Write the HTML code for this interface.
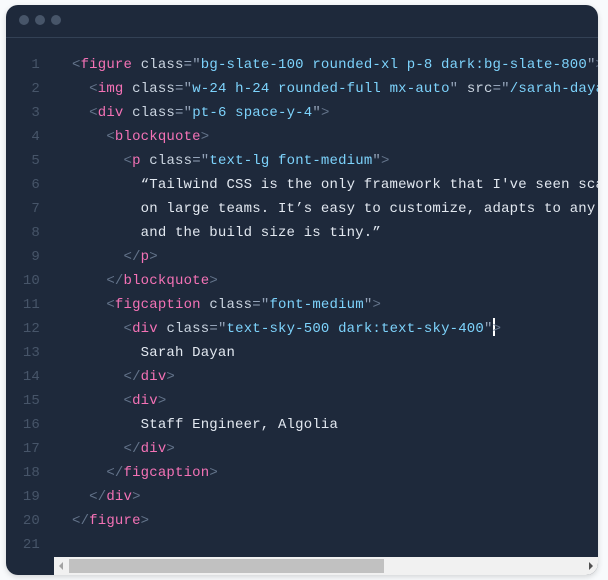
<!DOCTYPE html>
<html><head><meta charset="utf-8"><style>
html,body{margin:0;padding:0;width:608px;height:580px;background:#f8fafc;overflow:hidden}
.card{position:absolute;left:6px;top:5px;width:592px;height:570px;background:#1e293b;border-radius:12px;overflow:hidden;box-shadow:0 2px 6px rgba(0,0,0,.15)}
.hdr{height:32px;border-bottom:1px solid #334155;position:relative}
.dot{position:absolute;top:10px;width:10px;height:10px;border-radius:50%;background:#475569}
.code{position:absolute;top:48px;left:0;font-family:"Liberation Mono",monospace;font-size:14px;line-height:24px;white-space:pre;color:#e2e8f0;letter-spacing:0.18px}
.ln{position:absolute;top:0;left:0;width:34px;text-align:right;color:#475569}
.tx{position:absolute;top:0;left:66px}
.t{color:#f472b6}.p{color:#64748b}.a{color:#cbd5e1}.s{color:#7dd3fc}.e{color:#94a3b8}
.cur{display:inline-block;width:2px;height:18px;background:#fff;vertical-align:-4px;margin-right:-2px}
.sb{position:absolute;left:48px;top:552px;width:544px;height:18px;background:#f1f1f1}
.th{position:absolute;left:15px;top:2px;width:315px;height:14px;background:#c1c1c1}
.ar{position:absolute;top:5px;width:0;height:0;border-top:4px solid transparent;border-bottom:4px solid transparent}
</style></head><body>
<div class="card">
<div class="hdr"><div class="dot" style="left:13px"></div><div class="dot" style="left:29px"></div><div class="dot" style="left:45px"></div></div>
<div class="code"><div class="ln">1
2
3
4
5
6
7
8
9
10
11
12
13
14
15
16
17
18
19
20
21</div><div class="tx"><span class="p">&lt;</span><span class="t">figure</span> <span class="a">class</span><span class="e">="</span><span class="s">bg-slate-100 rounded-xl p-8 dark:bg-slate-800</span><span class="e">"</span><span class="p">&gt;</span>
  <span class="p">&lt;</span><span class="t">img</span> <span class="a">class</span><span class="e">="</span><span class="s">w-24 h-24 rounded-full mx-auto</span><span class="e">"</span> <span class="a">src</span><span class="e">="</span><span class="s">/sarah-dayan.jpg</span><span class="e">"</span>
  <span class="p">&lt;</span><span class="t">div</span> <span class="a">class</span><span class="e">="</span><span class="s">pt-6 space-y-4</span><span class="e">"</span><span class="p">&gt;</span>
    <span class="p">&lt;</span><span class="t">blockquote</span><span class="p">&gt;</span>
      <span class="p">&lt;</span><span class="t">p</span> <span class="a">class</span><span class="e">="</span><span class="s">text-lg font-medium</span><span class="e">"</span><span class="p">&gt;</span>
        “Tailwind CSS is the only framework that I've seen scale
        on large teams. It’s easy to customize, adapts to any design,
        and the build size is tiny.”
      <span class="p">&lt;/</span><span class="t">p</span><span class="p">&gt;</span>
    <span class="p">&lt;/</span><span class="t">blockquote</span><span class="p">&gt;</span>
    <span class="p">&lt;</span><span class="t">figcaption</span> <span class="a">class</span><span class="e">="</span><span class="s">font-medium</span><span class="e">"</span><span class="p">&gt;</span>
      <span class="p">&lt;</span><span class="t">div</span> <span class="a">class</span><span class="e">="</span><span class="s">text-sky-500 dark:text-sky-400</span><span class="e">"</span><span class="cur"></span><span class="p">&gt;</span>
        Sarah Dayan
      <span class="p">&lt;/</span><span class="t">div</span><span class="p">&gt;</span>
      <span class="p">&lt;</span><span class="t">div</span><span class="p">&gt;</span>
        Staff Engineer, Algolia
      <span class="p">&lt;/</span><span class="t">div</span><span class="p">&gt;</span>
    <span class="p">&lt;/</span><span class="t">figcaption</span><span class="p">&gt;</span>
  <span class="p">&lt;/</span><span class="t">div</span><span class="p">&gt;</span>
<span class="p">&lt;/</span><span class="t">figure</span><span class="p">&gt;</span></div></div>
<div class="sb"><div class="ar" style="left:5px;border-right:4px solid #a3a3a3"></div><div class="th"></div><div class="ar" style="right:5px;border-left:4px solid #505050"></div></div>
</div>
</body></html>
